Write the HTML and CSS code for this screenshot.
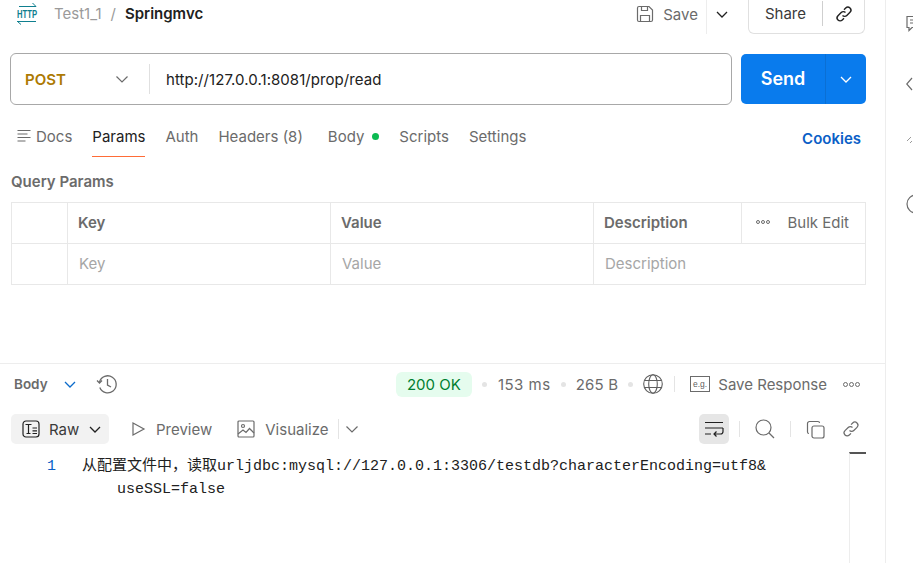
FILE: index.html
```html
<!DOCTYPE html>
<html lang="en">
<head>
<meta charset="utf-8">
<title>Springmvc</title>
<link rel="stylesheet" href="styles.css">
</head>
<body>
<div class="app">
  <main class="main">
    <section class="request">
      <header class="topbar">
        <div class="crumbs">
          <svg class="http-icon" width="22" height="24" viewBox="0 0 22 24" fill="none" stroke="#0f7f8f" stroke-width="1"><path d="M3 6.500h17M16.500 3l3.500 3.500M1 21.500h19M5 24.500L1.500 21.500"/><text x="11" y="18" text-anchor="middle" textLength="20" lengthAdjust="spacingAndGlyphs" class="http-text">HTTP</text></svg>
          <span class="crumb-parent">Test1_1</span>
          <span class="crumb-sep">/</span>
          <span class="crumb-current">Springmvc</span>
        </div>
        <div class="actions">
          <span class="save">
            <svg width="20" height="20" viewBox="0 0 20 20" fill="none" stroke="#6b6b6b" stroke-width="1.2"><path d="M2.500 4a1.500 1.500 0 0 1 1.500-1.500h10l3.500 3.500v10a1.500 1.500 0 0 1-1.500 1.500H4A1.500 1.500 0 0 1 2.500 16z"/><path d="M6.500 2.500v4h6v-4M5.500 17.500v-6h9v6"/></svg>
            <span>Save</span>
          </span>
          <span class="save-more">
            <svg width="14" height="14" viewBox="0 0 14 14" fill="none" stroke="#212121" stroke-width="1.300"><path d="M2 5l5 5 5-5"/></svg>
          </span>
          <div class="share">
            <span class="share-label">Share</span>
            <span class="share-link">
              <svg width="20" height="20" viewBox="0 0 20 20" fill="none" stroke="#212121" stroke-width="1.400"><path d="M8.500 11.500a3 3 0 0 0 4.300 0l3.200-3.200a3 3 0 0 0-4.300-4.300L10 5.700"/><path d="M11.500 8.500a3 3 0 0 0-4.300 0l-3.200 3.200a3 3 0 0 0 4.300 4.300l1.700-1.700"/></svg>
            </span>
          </div>
        </div>
      </header>

      <div class="url-row">
        <div class="url-box">
          <div class="method">
            <span>POST</span>
            <svg width="14" height="14" viewBox="0 0 14 14" fill="none" stroke="#6b6b6b" stroke-width="1.200"><path d="M1.500 4.500L7 10l5.500-5.500"/></svg>
          </div>
          <div class="url">http://127.0.0.1:8081/prop/read</div>
        </div>
        <div class="send">
          <span class="send-label">Send</span>
          <span class="send-more">
            <svg width="14" height="14" viewBox="0 0 14 14" fill="none" stroke="#fff" stroke-width="1.300"><path d="M2 5l5 5 5-5"/></svg>
          </span>
        </div>
      </div>

      <nav class="tabs">
        <span class="tab tab-docs">
          <svg width="14" height="14" viewBox="0 0 14 14" fill="none" stroke="#6b6b6b" stroke-width="1.100"><path d="M0.500 1.500h13M0.500 5h10M0.500 8.500h13M0.500 12h8"/></svg>
          <span>Docs</span>
        </span>
        <span class="tab tab-active">Params</span>
        <span class="tab">Auth</span>
        <span class="tab tab-headers">Headers (8)</span>
        <span class="tab tab-body"><span>Body</span><i class="dot"></i></span>
        <span class="tab">Scripts</span>
        <span class="tab">Settings</span>
        <span class="cookies">Cookies</span>
      </nav>

      <h2 class="section-title">Query Params</h2>

      <div class="params">
        <div class="cell"></div>
        <div class="cell head">Key</div>
        <div class="cell head">Value</div>
        <div class="cell head">Description</div>
        <div class="cell bulk">
          <span class="dots"><i></i><i></i><i></i></span>
          <span>Bulk Edit</span>
        </div>
        <div class="cell"></div>
        <div class="cell ph">Key</div>
        <div class="cell ph">Value</div>
        <div class="cell ph span2">Description</div>
      </div>
    </section>

    <section class="response">
      <div class="res-head">
        <div class="res-left">
          <span class="res-title">Body</span>
          <svg class="res-chev" width="14" height="14" viewBox="0 0 14 14" fill="none" stroke="#0b6bcb" stroke-width="1.300"><path d="M2 5l5 5 5-5"/></svg>
          <svg class="res-history" width="22" height="22" viewBox="0 0 22 22" fill="none" stroke="#6b6b6b" stroke-width="1.300"><path d="M3.500 9a8.500 8.500 0 1 1 .3 5.500"/><path d="M1 7.500l2.500 2.500L6 7.500"/><path d="M11.500 6v6l3.500 2"/></svg>
        </div>
        <div class="res-right">
          <span class="status">200 OK</span>
          <i class="sep-dot sep-first"></i>
          <span class="time">153 ms</span>
          <i class="sep-dot"></i>
          <span class="size">265 B</span>
          <i class="sep-dot"></i>
          <svg class="globe" width="20" height="20" viewBox="0 0 20 20" fill="none" stroke="#5f5f5f" stroke-width="1.100"><circle cx="10" cy="10" r="9.300"/><ellipse cx="10" cy="10" rx="4.300" ry="9.300"/><path d="M1.500 6.500h17M1.500 13.500h17"/></svg>
          <i class="vsep vsep-eg"></i>
          <svg class="eg" width="20" height="16" viewBox="0 0 20 16"><rect x="0.500" y="0.500" width="19" height="15" fill="none" stroke="#6b6b6b"/><text x="10" y="11" text-anchor="middle" class="eg-text">e.g.</text></svg>
          <span class="save-res">Save Response</span>
          <span class="dots dots-lg"><i></i><i></i><i></i></span>
        </div>
      </div>

      <div class="res-tools">
        <div class="views">
          <span class="raw">
            <svg width="18" height="18" viewBox="0 0 18 18" fill="none" stroke="#212121" stroke-width="1.200"><rect x="1" y="1" width="16" height="16" rx="3"/><path d="M3.500 4.500h6M6.500 4.500v9M4.500 13.500h4M10.500 8h4.500M10.500 10.800h4.500M10.500 13.500h4.500"/></svg>
            <span>Raw</span>
            <svg width="14" height="14" viewBox="0 0 14 14" fill="none" stroke="#212121" stroke-width="1.300"><path d="M2 5l5 5 5-5"/></svg>
          </span>
          <span class="view view-preview">
            <svg width="16" height="16" viewBox="0 0 16 16" fill="none" stroke="#6b6b6b" stroke-width="1.200"><path d="M3 2l11 6-11 6z"/></svg>
            <span>Preview</span>
          </span>
          <span class="view view-visual">
            <svg width="18" height="18" viewBox="0 0 18 18" fill="none" stroke="#6b6b6b" stroke-width="1.200"><rect x="1" y="1" width="16" height="16" rx="1"/><circle cx="6" cy="6" r="1.500"/><path d="M1 14l5-4 3 2.500 3.500-4L17 13"/></svg>
            <span>Visualize</span>
          </span>
          <i class="vsep vsep-tall"></i>
          <svg class="view-more" width="14" height="14" viewBox="0 0 14 14" fill="none" stroke="#6b6b6b" stroke-width="1.200"><path d="M1.500 4.500L7 10l5.500-5.500"/></svg>
        </div>
        <div class="tools">
          <span class="wrap">
            <svg width="20" height="20" viewBox="0 0 20 20" fill="none" stroke="#212121" stroke-width="1.200"><path d="M1 3.500h18M1 9h18M1 15h6"/><path d="M19 9v3.500a2.500 2.500 0 0 1-2.500 2.500H10M12.500 12.500L10 15l2.500 2.500"/></svg>
          </span>
          <i class="vsep vsep-a"></i>
          <svg class="tool-search" width="20" height="20" viewBox="0 0 20 20" fill="none" stroke="#6b6b6b" stroke-width="1.200"><circle cx="8.500" cy="8.500" r="7.500"/><path d="M14 14l5 5"/></svg>
          <i class="vsep vsep-b"></i>
          <svg class="tool-copy" width="19" height="19" viewBox="0 0 19 19" fill="none" stroke="#6b6b6b" stroke-width="1.200"><rect x="6" y="6" width="12" height="12" rx="2"/><path d="M3 13.500A1.500 1.500 0 0 1 1.500 12V3.500a2 2 0 0 1 2-2H12A1.500 1.500 0 0 1 13.500 3"/></svg>
          <svg class="tool-link" width="20" height="20" viewBox="0 0 20 20" fill="none" stroke="#6b6b6b" stroke-width="1.200"><path d="M8.500 11.500a3 3 0 0 0 4.300 0l3.200-3.200a3 3 0 0 0-4.300-4.300L10 5.700"/><path d="M11.500 8.500a3 3 0 0 0-4.300 0l-3.200 3.200a3 3 0 0 0 4.300 4.300l1.700-1.700"/></svg>
        </div>
      </div>

      <div class="code">
        <span class="line-no">1</span>
        <div class="code-text">从配置文件中，读取urljdbc:mysql://127.0.0.1:3306/testdb?characterEncoding=utf8&amp;<br><span class="wrapped">useSSL=false</span></div>
        <div class="scroll"></div>
      </div>
    </section>
  </main>
  <aside class="rail">
    <svg class="rail-doc" width="18" height="18" viewBox="0 0 18 18" fill="none" stroke="#6b6b6b" stroke-width="1.200"><path d="M1 1.500h13v11H6l-3 3v-3H1zM4 5h7M4 8h7"/></svg>
    <svg class="rail-code" width="18" height="18" viewBox="0 0 18 18" fill="none" stroke="#6b6b6b" stroke-width="1.200"><path d="M6 3L0.700 9 6 15"/></svg>
    <svg class="rail-x" width="18" height="18" viewBox="0 0 18 18" fill="none" stroke="#9a9a9a" stroke-width="1"><path d="M1 12l4-4M4 14l2-2"/></svg>
    <svg class="rail-info" width="20" height="20" viewBox="0 0 20 20" fill="none" stroke="#6b6b6b" stroke-width="1.200"><circle cx="10" cy="10" r="9"/></svg>
  </aside>
</div>
</body>
</html>
```
FILE: styles.css
```css
* { box-sizing: border-box; }
html, body { margin: 0; height: 100%; overflow: hidden; background: #fff; }
body { font-family: Inter, "Liberation Sans", sans-serif; font-size: 15px; color: #6b6b6b; }
i { display: block; }
svg { flex: none; }
.app { display: flex; width: 913px; height: 563px; }
.main { width: 885px; display: flex; flex-direction: column; }
.rail { flex: 1; border-left: 1px solid #ededed; display: flex; flex-direction: column; padding: 15px 0 0 20px; overflow: hidden; }
.rail-code { margin-top: 42px; }
.rail-x { margin-top: 36px; }
.rail-info { margin-top: 47px; }
.request { height: 363px; padding: 0 19px 0 10px; }
.topbar { display: flex; justify-content: space-between; height: 34px; margin-right: 1px; }
.crumbs { display: flex; align-items: center; height: 28px; padding-left: 6px; margin-top: -1px; }
.http-icon { overflow: visible; margin-top: -2px; }
.http-text { font: 700 10.500px "Liberation Sans", sans-serif; fill: #0f7f8f; stroke: none; }
.crumb-parent { margin-left: 16px; color: #9a9a9a; }
.crumb-sep { margin: 0 9px; color: #9a9a9a; }
.crumb-current { color: #212121; font-weight: 600; }
.actions { display: flex; align-items: flex-start; }
.save { display: flex; align-items: center; gap: 8px; height: 28px; color: #6b6b6b; }
.save-more { display: flex; align-items: center; height: 34px; margin-left: 8px; padding-left: 8px; border-left: 1px solid #ededed; }
.save-more svg { margin-top: -6px; }
.share { display: flex; align-items: center; height: 34px; margin-left: 19px; border: 1px solid #e0e0e0; border-top: none; border-radius: 0 0 6px 6px; }
.share-label { padding: 0 16px; color: #3a3a3a; margin-top: -6px; }
.share-link { display: flex; align-items: center; padding: 0 10px 0 11px; height: 25px; margin-top: -6px; border-left: 1px solid #cfcfcf; }
.url-row { display: flex; gap: 9px; margin-top: 19px; }
.url-box { flex: 1; height: 52px; border: 1px solid #a8a8a8; border-radius: 6px; display: flex; align-items: center; }
.method { width: 139px; height: 30px; display: flex; align-items: center; justify-content: space-between; padding: 0 20px 0 14px; border-right: 1px solid #e0e0e0; font-weight: 600; color: #ad7a03; }
.url { padding-left: 16px; color: #212121; letter-spacing: 0.06px; }
.send { width: 125px; height: 50px; margin-top: 1px; display: flex; background: #097bed; border-radius: 5px; color: #fff; }
.send-label { width: 84px; display: flex; align-items: center; justify-content: center; padding-bottom: 1px; font-size: 18px; font-weight: 600; }
.send-more { flex: 1; display: flex; align-items: center; justify-content: center; border-left: 1px solid #0a6fd4; }
.tabs { display: flex; align-items: center; height: 40px; margin-top: 12px; padding-left: 7px; }
.tab { display: flex; align-items: center; height: 40px; padding-bottom: 2px; margin-right: 20px; }
.tab-docs { gap: 5px; }
.tab-active { color: #212121; position: relative; }
.tab-active::after { content: ""; position: absolute; left: 0; right: 0; bottom: 0; height: 1px; background: #ff6c37; }
.tab-headers { margin-right: 25px; }
.dot { width: 7px; height: 7px; border-radius: 50%; background: #0cbb52; margin-left: 8px; }
.cookies { margin-left: auto; margin-right: 5px; color: #0b5fc7; font-weight: 600; padding-top: 2px; }
.section-title { margin: 16px 0 0 1px; font-size: 15px; font-weight: 600; color: #6b6b6b; line-height: 17px; }
.params { display: grid; grid-template-columns: 56px 263px 263px 148px 1fr; margin: 12px 0 0 1px; border-top: 1px solid #e8e8e8; border-left: 1px solid #e8e8e8; }
.cell { height: 41px; border-right: 1px solid #e8e8e8; border-bottom: 1px solid #e8e8e8; display: flex; align-items: center; padding: 0 0 2px 10px; }
.head { font-weight: 600; color: #6b6b6b; }
.bulk { justify-content: space-between; padding: 0 16px 2px 14px; }
.ph { color: #a6a6a6; padding-left: 11px; }
.span2 { grid-column: span 2; }
.dots { display: flex; gap: 1px; }
.dots i { width: 4px; height: 4px; border: 1px solid #6b6b6b; border-radius: 50%; }
.response { flex: 1; border-top: 1px solid #ededed; display: flex; flex-direction: column; }
.res-head { display: flex; justify-content: space-between; align-items: center; height: 40px; padding: 0 25px 0 14px; }
.res-left { display: flex; align-items: center; }
.res-title { font-size: 13.500px; font-weight: 600; }
.res-chev { margin-left: 15px; }
.res-history { margin-left: 19px; }
.res-right { display: flex; align-items: center; }
.status { width: 76px; height: 25px; background: #e5fcee; border-radius: 6px; color: #007f31; display: flex; align-items: center; justify-content: center; }
.sep-dot { width: 5px; height: 5px; border-radius: 50%; background: #e4e4e4; margin: 0 10px; }
.sep-first { margin-right: 11px; }
.time { letter-spacing: 0.5px; }
.size { letter-spacing: 0.2px; }
.vsep { width: 1px; height: 16px; background: #e4e4e4; flex: none; }
.vsep-eg { margin: 0 5px 0 11px; }
.eg { margin-left: 10px; }
.eg-text { font: 8.500px "Liberation Sans", sans-serif; fill: #5f5f5f; }
.save-res { margin-left: 8px; }
.dots-lg { margin-left: 16px; }
.dots-lg i { width: 5px; height: 5px; }
.res-tools { display: flex; justify-content: space-between; align-items: center; height: 30px; margin-top: 10px; padding: 0 24px 0 11px; }
.views { display: flex; align-items: center; }
.raw { display: flex; align-items: center; gap: 9px; width: 98px; height: 30px; padding-left: 11px; background: #f2f2f2; border-radius: 5px; color: #3a3a3a; }
.view { display: flex; align-items: center; gap: 10px; }
.view-preview { margin-left: 21px; }
.view-visual { margin-left: 25px; }
.vsep-tall { height: 20px; margin: 0 6px 0 9px; }
.tools { display: flex; align-items: center; }
.wrap { display: flex; align-items: center; justify-content: center; width: 30px; height: 30px; background: #e6e6e6; border-radius: 5px; }
.vsep-a { margin: 0 15px 0 10px; }
.vsep-b { margin: 0 15px; }
.tool-link { margin-left: 16px; }
.code { display: flex; flex: 1; font: 15px/23px "Liberation Mono", "Noto Sans CJK SC", monospace; color: #212121; margin-top: 8px; padding: 3px 0 0 47px; position: relative; }
.line-no { width: 35px; color: #0b5fc7; }
.code-text { flex: none; width: 720px; }
.wrapped { padding-left: 35px; }
.scroll { position: absolute; left: 849px; top: 0; bottom: 0; width: 17px; border-top: 2px solid #555; border-left: 1px solid #ededed; }
```
